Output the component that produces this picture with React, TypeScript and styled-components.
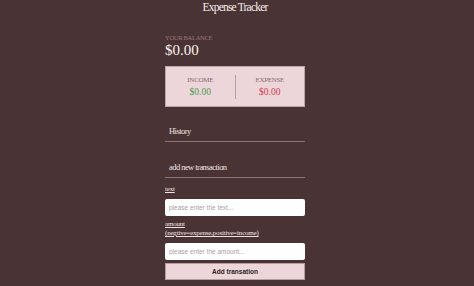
import styled, { createGlobalStyle } from 'styled-components';

const GlobalStyle = createGlobalStyle`
  html, body {
    margin: 0;
    padding: 0;
    background: #4a3334;
  }
  body {
    font-family: 'Liberation Serif', 'DejaVu Serif', serif;
  }
`;

const Page = styled.div`
  display: flex;
  flex-direction: column;
  align-items: center;
  min-height: 286px;
  padding-right: 4px;
  background: #4a3334;
  color: #f4e6e6;
`;

const Title = styled.h1`
  margin: 1px 0 0;
  font-size: 11.5px;
  font-weight: 400;
  letter-spacing: -0.8px;
  color: #f6ecec;
`;

const Container = styled.div`
  width: 140px;
  margin-top: 21px;
  display: flex;
  flex-direction: column;
`;

const BalanceLabel = styled.h4`
  margin: 0;
  font-size: 6.5px;
  font-weight: 400;
  color: #9b7479;
  text-transform: uppercase;
  letter-spacing: -0.3px;
`;

const Balance = styled.div`
  margin-top: 1px;
  font-size: 15px;
  line-height: 17px;
  color: #fbf2f2;
`;

const Card = styled.div`
  margin-top: 7px;
  height: 41px;
  box-sizing: border-box;
  display: flex;
  align-items: center;
  background: #ecd6d9;
  border: 1.5px solid #bfa3a6;
`;

const Side = styled.div`
  flex: 1;
  display: flex;
  flex-direction: column;
  align-items: center;
  gap: 3px;
  font-size: 7px;
  color: #8a6a6e;
  text-transform: uppercase;
  letter-spacing: -0.3px;
`;

const Divider = styled.div`
  width: 1px;
  height: 24px;
  background: #b89c9f;
`;

const Money = styled.span<{ tone: 'plus' | 'minus' }>`
  font-size: 9.5px;
  letter-spacing: 0;
  color: ${({ tone }) => (tone === 'plus' ? '#4d9a4a' : '#d33a4e')};
`;

const Section = styled.h3<{ gap: number }>`
  margin: ${({ gap }) => gap}px 0 0;
  padding: 0 0 5px 4px;
  font-size: 8.5px;
  font-weight: 400;
  letter-spacing: -0.55px;
  color: #f1e3e3;
  border-bottom: 1px solid #8c7374;
`;

const Form = styled.form`
  display: flex;
  flex-direction: column;
`;

const FieldLabel = styled.label<{ gap: number }>`
  margin-top: ${({ gap }) => gap}px;
  font-size: 7px;
  line-height: 9px;
  color: #f1e3e3;
  text-decoration: underline;
  letter-spacing: -0.2px;
`;

const Input = styled.input`
  margin-top: 5px;
  height: 17px;
  box-sizing: border-box;
  padding: 0 4px;
  border: none;
  border-radius: 2px;
  background: #ffffff;
  font-family: 'Liberation Sans', Arial, sans-serif;
  font-size: 6.5px;
  outline: none;
  &::placeholder {
    color: #a3a3a3;
  }
`;

const Button = styled.button`
  margin-top: 3px;
  height: 17px;
  box-sizing: border-box;
  border: 1px solid #b89c9f;
  background: #ecd6d9;
  color: #2a1f20;
  font-family: 'Liberation Sans', Arial, sans-serif;
  font-size: 6.5px;
  font-weight: 700;
  cursor: pointer;
`;

export default function App() {
  return (
    <>
      <GlobalStyle />
      <Page>
        <Title>Expense Tracker</Title>
        <Container>
          <BalanceLabel>Your Balance</BalanceLabel>
          <Balance>$0.00</Balance>
          <Card>
            <Side>
              Income
              <Money tone="plus">$0.00</Money>
            </Side>
            <Divider />
            <Side>
              Expense
              <Money tone="minus">$0.00</Money>
            </Side>
          </Card>
          <Section gap={19}>History</Section>
          <Section gap={20}>add new transaction</Section>
          <Form onSubmit={(e) => e.preventDefault()}>
            <FieldLabel gap={7} htmlFor="text">text</FieldLabel>
            <Input id="text" type="text" placeholder="please enter the text..." />
            <FieldLabel gap={4} htmlFor="amount">
              amount
              <br />
              (negtive=expense,positive=income)
            </FieldLabel>
            <Input id="amount" type="number" placeholder="please enter the amount..." />
            <Button type="submit">Add transation</Button>
          </Form>
        </Container>
      </Page>
    </>
  );
}
